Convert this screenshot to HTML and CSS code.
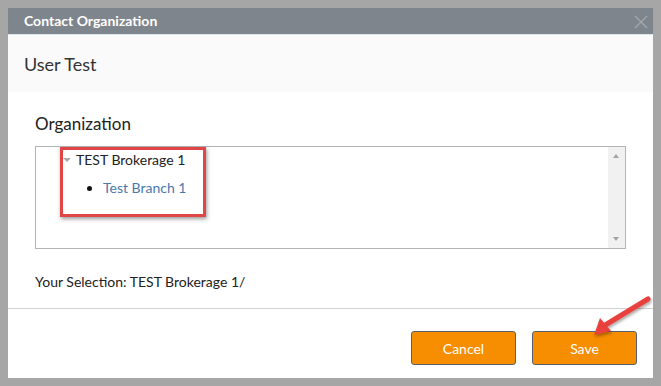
FILE: index.html
```html
<!DOCTYPE html>
<html lang="en">
<head>
	<meta charset="utf-8">
	<title>Contact Organization</title>
	<link rel="stylesheet" href="styles.css">
</head>
<body>
<div id="dialog">
	<div class="titlebar">
		<span class="title">Contact Organization</span>
		<svg class="close" width="14" height="14" viewBox="0 0 14 14">
			<path d="M1 1 L13 13 M13 1 L1 13" stroke="#a4a9ae" stroke-width="1.2" fill="none"/>
		</svg>
	</div>
	<div class="head">User Test</div>
	<div class="content">
		<h3 class="label">Organization</h3>
		<div class="treebox">
			<div class="tree">
				<div class="node">
					<span class="caret"></span>TEST Brokerage 1
				</div>
				<ul class="children">
					<li><a href="#">Test Branch 1</a></li>
				</ul>
			</div>
			<div class="scrollbar">
				<span class="arr up"></span>
				<span class="arr down"></span>
			</div>
			<div class="highlight"></div>
		</div>
		<p class="selection">Your Selection: TEST Brokerage 1/</p>
	</div>
	<div class="footer">
		<button class="btn">Cancel</button>
		<button class="btn">Save</button>
	</div>
	<svg class="pointer" width="70" height="50" viewBox="0 0 70 50">
		<defs>
			<filter id="sh" x="-20%" y="-20%" width="140%" height="140%">
				<feDropShadow dx="1" dy="2" stdDeviation="1.5" flood-color="#000" flood-opacity="0.35"/>
			</filter>
		</defs>
		<g filter="url(#sh)">
			<path d="M60 5 L14 33" stroke="#e8403c" stroke-width="5" stroke-linecap="round" fill="none"/>
			<path d="M6 41 L12 24 L23 37 Z" fill="#e8403c"/>
		</g>
	</svg>
</div>
</body>
</html>
```

FILE: styles.css
```css
html, body {
	margin: 0;
	padding: 0;
	background-color: #a6a6a6;
}
body {
	padding: 8px;
	font-family: Lato, "Open Sans", sans-serif;
	color: #333;
}
#dialog {
	position: relative;
	width: 645px;
	height: 370px;
	background-color: white;
	display: flex;
	flex-direction: column;
}
.titlebar {
	height: 26px;
	background-color: #7f858c;
	border-bottom: 1px solid #dbe6ef;
	display: flex;
	align-items: center;
	justify-content: space-between;
	padding: 0 5px 0 16px;
}
.title {
	color: white;
	font-weight: bold;
	font-size: 14px;
	margin-top: -1px;
}
.close { margin-top: 1px; }
.head {
	height: 57px;
	background-color: #fafafa;
	font-size: 18px;
	padding-left: 16px;
	display: flex;
	align-items: center;
	color: #333;
}
.content {
	padding: 0 27px;
	height: 216px;
	border-bottom: 1px solid #d0d0d0;
}
.label {
	margin: 21px 0 12px;
	font-size: 17px;
	font-weight: normal;
	color: #222;
}
.treebox {
	position: relative;
	height: 101px;
	border: 1px solid #b4b4b4;
	display: flex;
}
.tree {
	flex: 1;
	padding: 4px 0 0 40px;
	font-size: 14px;
}
.node {
	color: #222;
	height: 18px;
	line-height: 18px;
	position: relative;
}
.caret {
	position: absolute;
	left: -13px;
	top: 7px;
	border-left: 4px solid transparent;
	border-right: 4px solid transparent;
	border-top: 4px solid #aaa;
}
.children {
	margin: 10px 0 0;
	padding-left: 27px;
	list-style: disc;
	color: #111;
}
.children a {
	color: #4a78ad;
	text-decoration: none;
}
.scrollbar {
	width: 17px;
	background-color: #f1f1f1;
	position: relative;
}
.arr {
	position: absolute;
	left: 5px;
	border-left: 3.5px solid transparent;
	border-right: 3.5px solid transparent;
}
.arr.up { top: 7px; border-bottom: 4px solid #a3a3a3; }
.arr.down { bottom: 7px; border-top: 4px solid #a3a3a3; }
.highlight {
	position: absolute;
	left: 24px;
	top: 0px;
	width: 140px;
	height: 64px;
	border: 3px solid #e04646;
	box-shadow: 1px 2px 4px rgba(0,0,0,0.4);
	pointer-events: none;
}
.selection {
	margin: 24px 0 0;
	font-size: 14px;
	color: #222;
}
.footer {
	flex: 1;
	display: flex;
	justify-content: flex-end;
	align-items: flex-start;
	gap: 16px;
	padding: 22px 16px 0;
}
.btn {
	width: 105px;
	height: 34px;
	background-color: #f78d00;
	border: 1px solid #56616d;
	border-radius: 3px;
	color: white;
	font-family: Lato, sans-serif;
	font-size: 14px;
}
.pointer {
	position: absolute;
	left: 580px;
	top: 286px;
}
```
